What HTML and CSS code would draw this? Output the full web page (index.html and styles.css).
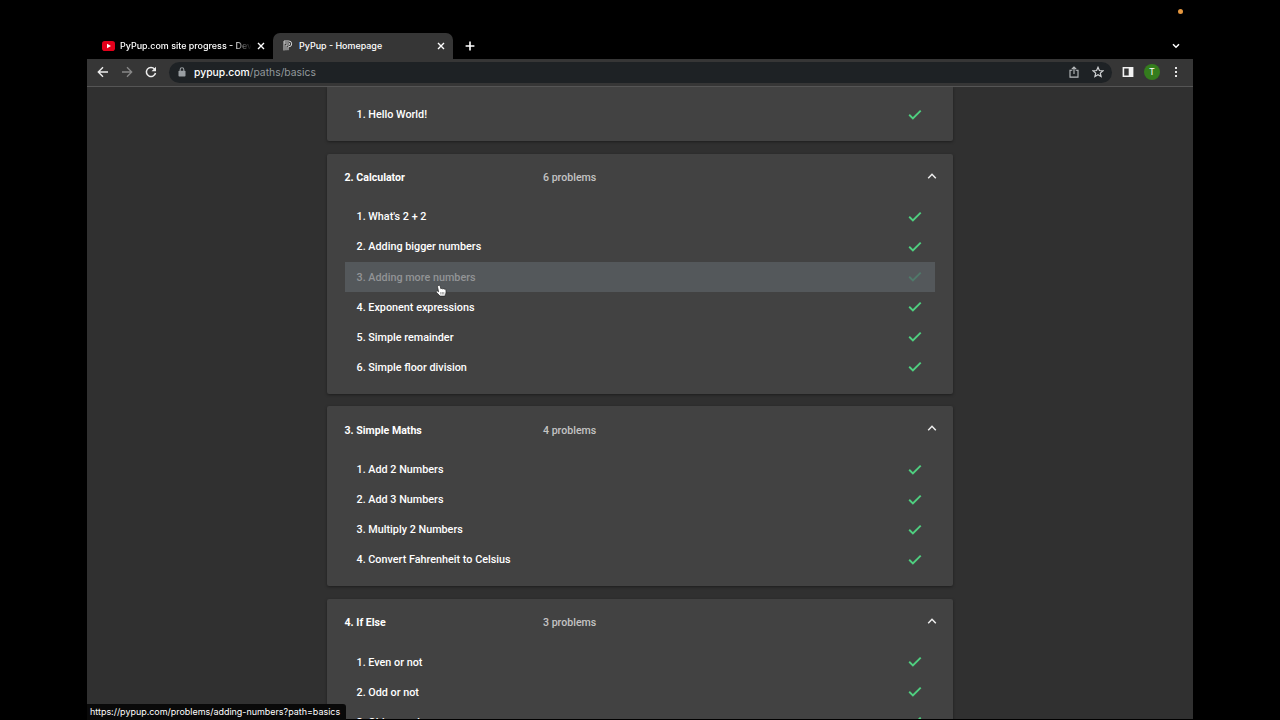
FILE: index.html
```
<!DOCTYPE html>
<html lang="en">
<head>
  <meta charset="UTF-8">
  <title>PyPup - Homepage</title>
  <link rel="stylesheet" href="styles.css">
</head>

<body>

  <!-- Shared icons -->
  <svg class="sprite">
    <symbol id="check" viewBox="0 0 14 12"><path d="M1.2 5.8 4.9 9.4 12.7 1.6" fill="none" stroke="currentColor" stroke-width="1.9"/></symbol>
    <symbol id="chevron" viewBox="0 0 10 8"><path d="M1.2 6.2 5 2.3l3.8 3.9" fill="none" stroke="currentColor" stroke-width="1.5"/></symbol>
    <symbol id="close" viewBox="0 0 8 8"><path d="m1 1 6 6M7 1 1 7" fill="none" stroke="currentColor" stroke-width="1.4"/></symbol>
  </svg>

  <div class="menubar"><span class="recording-dot"></span></div>

  <div class="browser">
    <!-- Tabs -->
    <div class="tabs">
      <div class="tab">
        <svg class="youtube" viewBox="0 0 13 10"><rect width="13" height="10" rx="2.8" fill="#e3001b"/><path d="m5 2.8 4 2.2-4 2.2z" fill="#fff"/></svg>
        <span class="tab-title fade">PyPup.com site progress - Dev</span>
        <svg class="close"><use href="#close"/></svg>
      </div>
      <div class="tab active">
        <svg class="pypup" viewBox="0 0 10 11"><path d="M1 10.5V1h4.8a2.9 2.9 0 0 1 0 5.8H5v3.4M1 3h4.6a1 1 0 0 1 0 2H3v5.3" fill="none" stroke="#d8d8d8"/></svg>
        <span class="tab-title">PyPup - Homepage</span>
        <svg class="close"><use href="#close"/></svg>
      </div>
      <svg class="new-tab" viewBox="0 0 10 10"><path d="M5 .6v8.8M.6 5h8.8" stroke="#fff" stroke-width="1.6"/></svg>
      <svg class="tab-search" viewBox="0 0 8 6"><path d="m1 1.2 3 3 3-3" fill="none" stroke="#fff" stroke-width="1.5"/></svg>
    </div>

    <!-- Toolbar -->
    <div class="toolbar">
      <svg class="nav-icon" viewBox="0 0 12 12"><path d="M11 6H1.5M6 1.3 1.3 6 6 10.7" fill="none" stroke="#eee" stroke-width="1.4"/></svg>
      <svg class="nav-icon" viewBox="0 0 12 12"><path d="M1 6h9.5M6 1.3 10.7 6 6 10.7" fill="none" stroke="#888" stroke-width="1.3"/></svg>
      <svg class="nav-icon" viewBox="0 0 12 12"><path d="M9.6 3.1A4.6 4.6 0 1 0 10.5 7" fill="none" stroke="#eee" stroke-width="1.5"/><path d="M11 .8v4.5H6.5z" fill="#eee"/></svg>
      <div class="address">
        <svg class="lock" viewBox="0 0 8 10"><rect x=".5" y="3.8" width="7" height="5.7" rx=".8" fill="#9a9fa3"/><path d="M2.2 4V2.6a1.8 1.8 0 0 1 3.6 0V4" fill="none" stroke="#9a9fa3" stroke-width="1.1"/></svg>
        <span class="url"><b>pypup.com</b>/paths/basics</span>
        <svg class="share" viewBox="0 0 10 12"><path d="M3.3 4.3H1v6.8h8V4.3H6.7M5 8V1.2M2.8 3.2 5 1l2.2 2.2" fill="none" stroke="#b9bcbe" stroke-width="1.1"/></svg>
        <svg class="star" viewBox="0 0 12 12"><path d="m6 1.3 1.4 3.2 3.5.3-2.6 2.3.8 3.4L6 8.7l-3.1 1.8.8-3.4L1.1 4.8l3.5-.3z" fill="none" stroke="#d0d2d4" stroke-width="1.2"/></svg>
      </div>
      <svg class="panel" viewBox="0 0 12 12"><path fill-rule="evenodd" d="M.6 1h10.8v10H.6zM2.2 2.6v6.8h4.5V2.6z" fill="#f2f2f2"/></svg>
      <span class="avatar">T</span>
      <svg class="more" viewBox="0 0 4 12"><path d="M1 1h2v2H1zM1 5h2v2H1zM1 9h2v2H1z" fill="#e6e6e6"/></svg>
    </div>

    <!-- Page -->
    <main class="page">
      <section class="card card-first">
        <a class="problem">1. Hello World!<svg class="check"><use href="#check"/></svg></a>
      </section>

      <section class="card">
        <header class="card-header"><h2>2. Calculator</h2><span class="count">6 problems</span><svg class="chevron"><use href="#chevron"/></svg></header>
        <a class="problem">1. What's 2 + 2<svg class="check"><use href="#check"/></svg></a>
        <a class="problem">2. Adding bigger numbers<svg class="check"><use href="#check"/></svg></a>
        <a class="problem hovered">3. Adding more numbers<svg class="check"><use href="#check"/></svg></a>
        <a class="problem">4. Exponent expressions<svg class="check"><use href="#check"/></svg></a>
        <a class="problem">5. Simple remainder<svg class="check"><use href="#check"/></svg></a>
        <a class="problem">6. Simple floor division<svg class="check"><use href="#check"/></svg></a>
      </section>

      <section class="card">
        <header class="card-header"><h2>3. Simple Maths</h2><span class="count">4 problems</span><svg class="chevron"><use href="#chevron"/></svg></header>
        <a class="problem">1. Add 2 Numbers<svg class="check"><use href="#check"/></svg></a>
        <a class="problem">2. Add 3 Numbers<svg class="check"><use href="#check"/></svg></a>
        <a class="problem">3. Multiply 2 Numbers<svg class="check"><use href="#check"/></svg></a>
        <a class="problem">4. Convert Fahrenheit to Celsius<svg class="check"><use href="#check"/></svg></a>
      </section>

      <section class="card">
        <header class="card-header"><h2>4. If Else</h2><span class="count">3 problems</span><svg class="chevron"><use href="#chevron"/></svg></header>
        <a class="problem">1. Even or not<svg class="check"><use href="#check"/></svg></a>
        <a class="problem">2. Odd or not<svg class="check"><use href="#check"/></svg></a>
        <a class="problem">3. Old enough<svg class="check"><use href="#check"/></svg></a>
      </section>
    </main>
  </div>

  <div class="status">https://pypup.com/problems/adding-numbers?path=basics</div>

  <!-- Hand pointer -->
  <svg class="pointer" viewBox="0 0 12 14"><path d="M3.5 1.5c.9-.5 1.5.1 1.7.8l.7 2.5c.5-.5 1.3-.4 1.7.1.5-.4 1.2-.3 1.6.3.8-.4 1.6 0 1.7.9.2 1.6.2 3-.6 4.5l-.2 1.5H5L1.4 8.2C.9 7.3 2 6.6 2.8 7.2l.8.6-1-4.6c-.2-.8.2-1.4.9-1.7z" fill="#fff" stroke="#222" stroke-width=".7"/><path d="M5.8 8v2.5M7.3 8v2.5M8.8 8v2.5" stroke="#555" stroke-width=".6"/></svg>

</body>
</html>
```
FILE: styles.css
```
* {
  box-sizing: border-box;
}

body {
  margin: 0;
  height: 720px;
  overflow: hidden;
  background: #000;
  color: #fff;
  font-family: Roboto, sans-serif;
}

svg {
  display: block;
  flex: none;
}

.sprite {
  display: none;
}

.menubar {
  height: 33px;
  padding: 9px 97px 0 0;
  display: flex;
  justify-content: flex-end;
}

.recording-dot {
  width: 5px;
  height: 5px;
  border-radius: 50%;
  background: #e5973f;
}

.browser {
  width: 1106px;
  height: 686px;
  margin-left: 87px;
  overflow: hidden;
  display: flex;
  flex-direction: column;
}

.tabs {
  height: 26px;
  flex: none;
  display: flex;
  align-items: center;
  font-family: Inter, sans-serif;
  font-size: 8.95px;
  font-weight: 500;
}

.tab {
  width: 186px;
  height: 26px;
  padding: 0 8px 1px 15px;
  display: flex;
  align-items: center;
}

.tab.active {
  width: 180px;
  padding-left: 10px;
  background: #363636;
  border-radius: 7px 7px 0 0;
}

.tab-title {
  flex: 1;
  white-space: nowrap;
}

.fade {
  -webkit-mask-image: linear-gradient(90deg, #000 82%, transparent 96%);
  mask-image: linear-gradient(90deg, #000 82%, transparent 96%);
}

.youtube {
  width: 13px;
  height: 10px;
  margin-right: 5px;
}

.pypup {
  width: 10px;
  height: 11px;
  margin-right: 6px;
}

.close {
  width: 8px;
  height: 8px;
}

.new-tab {
  width: 10px;
  height: 10px;
  margin-left: 12px;
}

.tab-search {
  width: 8px;
  height: 6px;
  margin: 0 13px 0 auto;
}

.toolbar {
  height: 28px;
  flex: none;
  padding: 0 13px 1px 10px;
  display: flex;
  align-items: center;
  background: #363636;
  border-bottom: 1px solid #555;
}

.nav-icon {
  width: 12px;
  height: 12px;
  margin-right: 12px;
}

.address {
  width: 943px;
  height: 21px;
  padding: 0 8px 0 9px;
  margin: 0 10px 0 0;
  display: flex;
  align-items: center;
  background: #1e2225;
  border-radius: 11px;
}

.lock {
  width: 8px;
  height: 10px;
  margin-right: 8px;
}

.url {
  flex: 1;
  color: #92989c;
  font-family: Inter, sans-serif;
  font-size: 10.35px;
}

.url b {
  color: #fff;
  font-weight: 500;
}

.share {
  width: 10px;
  height: 12px;
  margin-right: 13px;
}

.star {
  width: 12px;
  height: 12px;
}

.panel {
  width: 12px;
  height: 12px;
  margin-right: 10px;
}

.avatar {
  width: 16px;
  height: 16px;
  flex: none;
  margin-right: 14px;
  border-radius: 50%;
  background: #347d1d;
  font-size: 9px;
  line-height: 16px;
  text-align: center;
}

.more {
  width: 4px;
  height: 12px;
}

.page {
  flex: 1;
  min-height: 0;
  overflow: hidden;
  padding-left: 240px;
  background: #303030;
}

.card {
  width: 625.5px;
  padding: 0 17.5px 11.4px;
  margin-bottom: 12.6px;
  background: #424242;
  border-radius: 2px;
  box-shadow: 0 1px 3px rgba(0, 0, 0, 0.4);
}

.card-first {
  padding-top: 12.5px;
  border-radius: 0 0 2px 2px;
}

.card-header {
  height: 48.2px;
  display: flex;
  align-items: center;
  font-size: 10.6px;
}

.card-header h2 {
  width: 198.5px;
  margin: 0;
  font-size: 10.6px;
  font-weight: 700;
}

.count {
  color: #c4c4c4;
  font-weight: 500;
}

.chevron {
  width: 10px;
  height: 8px;
  margin: -4px -1.5px 0 auto;
  color: #eee;
}

.problem {
  height: 30.1px;
  padding: 0 13px 0 12px;
  display: flex;
  align-items: center;
  justify-content: space-between;
  font-size: 10.8px;
  font-weight: 500;
}

.check {
  width: 14px;
  height: 12px;
  color: #4fd080;
}

.hovered {
  background: #54585b;
  color: #929496;
}

.hovered .check {
  color: #50796a;
}

.status {
  position: absolute;
  left: 87px;
  bottom: 0;
  width: 259px;
  height: 16px;
  padding-left: 3px;
  background: #090909;
  border-radius: 0 3px 0 0;
  font-family: Inter, sans-serif;
  font-size: 8.95px;
  line-height: 16px;
  white-space: nowrap;
}

.pointer {
  position: absolute;
  left: 435px;
  top: 284px;
  width: 12px;
  height: 14px;
}
```
